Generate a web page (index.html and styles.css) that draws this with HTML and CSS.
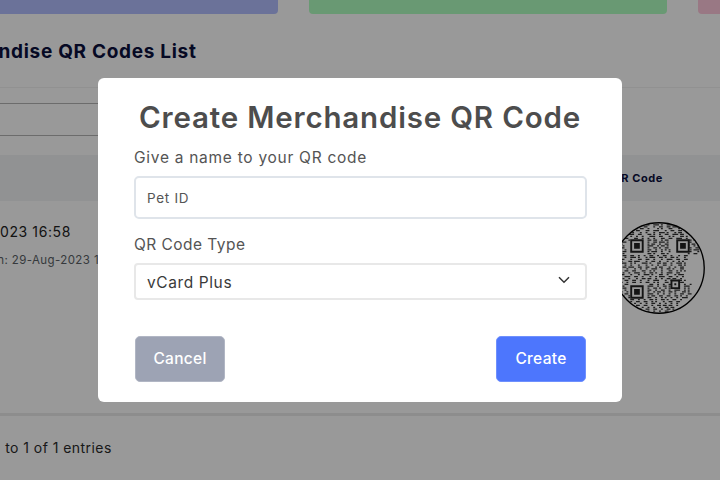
FILE: index.html
```html
<!DOCTYPE html>
<html lang="en">
<head>
<meta charset="utf-8">
<title>Merchandise QR Codes</title>
<link rel="stylesheet" href="styles.css">
</head>
<body>
<div class="page">
  <div class="stats">
    <div class="stat stat-blue"></div>
    <div class="stat stat-green"></div>
    <div class="stat stat-pink"></div>
  </div>
  <h2 class="list-title">Merchandise QR Codes List</h2>
  <div class="panel">
    <div class="filters">
      <div class="filter-box"></div>
    </div>
    <div class="thead"><span class="th-qr">QR Code</span></div>
    <div class="trow">
      <div class="dates">
        <div class="date-main">29-Aug-2023 16:58</div>
        <div class="date-sub">Updated on: 29-Aug-2023 16:58</div>
      </div>
      <svg class="qr" viewBox="0 0 48 48" aria-label="QR code">
        <defs><clipPath id="qr-clip"><circle cx="24" cy="24" r="23.6"/></clipPath></defs>
        <circle cx="24" cy="24" r="23.6" fill="#fff"/>
        <g clip-path="url(#qr-clip)">
          <path class="qr-mods" d="M17 1.5h2m2 0h3m1 0h1m2 0h4
M13 2.5h1m2 0h2m3 0h1m2 0h2m2 0h2m1 0h3m1 0h2
M10 3.5h3m1 0h2m2 0h1m4 0h1m1 0h1m3 0h2m3 0h1m2 0h3
M9 4.5h1m2 0h2m3 0h2m2 0h3m3 0h1m2 0h2m2 0h2m2 0h2
M6 5.5h2m2 0h1m3 0h1m2 0h1m3 0h1m2 0h3m1 0h1m3 0h1m1 0h2m2 0h1
M5 6.5h1m2 0h3m2 0h2m3 0h2m1 0h1m2 0h1m2 0h2m2 0h3m1 0h2
M4 7.5h3m2 0h1m2 0h1m2 0h1m3 0h3m2 0h2m3 0h1m1 0h1m3 0h2m1 0h1
M3 8.5h1m2 0h2m3 0h2m2 0h1m2 0h1m2 0h1m3 0h2m2 0h2m2 0h3m2 0h1
M3 9.5h2m3 0h1m9 0h2m1 0h2m2 0h1m1 0h2m10 0h2m1 0h1
M2 10.5h1m2 0h2m11 0h1m2 0h2m1 0h3m1 0h1m10 0h2m2 0h1
M2 11.5h3m13 0h1m1 0h2m2 0h1m2 0h2m10 0h1m1 0h2
M1 12.5h2m2 0h1m12 0h3m2 0h1m1 0h2m1 0h1m10 0h1m2 0h1m1 0h1
M1 13.5h1m2 0h2m12 0h1m2 0h2m1 0h1m2 0h2m10 0h2m2 0h2
M1 14.5h3m2 0h1m11 0h2m2 0h1m2 0h1m1 0h1m1 0h1m10 0h1m1 0h3
M2 15.5h1m2 0h2m11 0h1m1 0h3m2 0h1m3 0h1m9 0h2m3 0h1
M1 16.5h2m2 0h1m12 0h2m1 0h1m3 0h2m1 0h1m10 0h1m2 0h2
M1 17.5h1m3 0h2m2 0h2m2 0h1m2 0h1m2 0h2m2 0h1m2 0h2m2 0h1m3 0h1m2 0h2
M0 18.5h3m3 0h1m2 0h3m1 0h1m3 0h1m1 0h3m2 0h2m1 0h1m2 0h2m1 0h1m3 0h1
M1 19.5h1m2 0h2m3 0h1m3 0h2m2 0h2m2 0h1m3 0h1m2 0h3m2 0h2m2 0h2
M0 20.5h2m2 0h1m3 0h2m1 0h3m3 0h1m2 0h2m2 0h1m3 0h1m2 0h1m2 0h1m1 0h1
M1 21.5h1m2 0h3m2 0h1m1 0h1m3 0h3m1 0h1m3 0h2m1 0h2m2 0h1m2 0h3m1 0h1
M0 22.5h3m3 0h1m2 0h1m3 0h1m3 0h1m2 0h1m2 0h1m2 0h2m2 0h1m3 0h2m1 0h1
M1 23.5h2m2 0h2m1 0h3m2 0h2m2 0h2m3 0h1m1 0h2m3 0h1m2 0h1m2 0h2
M0 24.5h1m2 0h1m3 0h1m3 0h1m2 0h1m2 0h1m2 0h3m2 0h1m2 0h2m1 0h1m3 0h2
M1 25.5h3m2 0h2m2 0h2m3 0h2m2 0h1m1 0h1m3 0h1m3 0h2m2 0h1m1 0h1m1 0h1
M0 26.5h2m3 0h1m2 0h1m2 0h3m2 0h1m2 0h2m1 0h1m2 0h1m2 0h3m2 0h2
M1 27.5h1m2 0h2m3 0h1m3 0h1m2 0h3m1 0h1m3 0h2m2 0h1m3 0h1m1 0h3
M1 28.5h3m2 0h3m2 0h2m2 0h1m3 0h1m2 0h1m1 0h3m2 0h2m2 0h1m2 0h1
M1 29.5h1m3 0h1m2 0h1m3 0h1m2 0h2m1 0h2m2 0h1m2 0h1m2 0h2m1 0h2m2 0h1
M2 30.5h2m2 0h2m2 0h2m2 0h1m3 0h1m2 0h3m3 0h1m2 0h1m3 0h2m1 0h1
M1 31.5h1m2 0h1m2 0h1m2 0h2m2 0h1m2 0h2m2 0h1m1 0h1m3 0h2m2 0h1m3 0h2
M1 32.5h3m2 0h2m11 0h2m2 0h1m2 0h1m2 0h3m2 0h1m2 0h1m2 0h1
M2 33.5h1m2 0h1m12 0h3m2 0h1m2 0h2m1 0h1m3 0h2m2 0h3
M2 34.5h2m1 0h2m11 0h1m2 0h2m1 0h1m2 0h1m1 0h1m2 0h1m1 0h1m2 0h1m1 0h1
M2 35.5h1m3 0h1m11 0h2m2 0h1m2 0h2m2 0h1m2 0h3m2 0h1m1 0h1
M3 36.5h2m2 0h1m10 0h1m2 0h1m1 0h2m1 0h1m2 0h2m1 0h1m3 0h2m1 0h1
M3 37.5h1m2 0h2m10 0h3m2 0h1m2 0h1m2 0h1m2 0h1m2 0h2m2 0h2
M4 38.5h2m2 0h1m9 0h1m1 0h2m2 0h2m2 0h2m2 0h2m1 0h1m2 0h1
M4 39.5h1m3 0h1m9 0h2m2 0h1m2 0h1m1 0h1m2 0h1m2 0h1m2 0h3
M5 40.5h2m2 0h2m2 0h1m2 0h1m2 0h2m1 0h1m2 0h2m1 0h1m2 0h2m2 0h1
M6 41.5h1m2 0h1m2 0h2m2 0h2m2 0h1m1 0h1m3 0h1m2 0h2m2 0h2
M7 42.5h2m2 0h1m2 0h1m2 0h1m2 0h2m2 0h1m2 0h1m2 0h1m2 0h1
M9 43.5h1m2 0h2m2 0h2m2 0h1m2 0h2m1 0h2m1 0h2m2 0h1
M11 44.5h2m2 0h1m2 0h1m2 0h1m2 0h1m2 0h2m1 0h2
M14 45.5h1m2 0h2m2 0h2m2 0h1m2 0h2m1 0h1
M18 46.5h1m2 0h1m2 0h1m2 0h2"/>
          <path class="qr-finder" d="M9.5 9.5h6v6h-6zM33.5 9.5h6v6h-6zM9.5 33.5h6v6h-6z"/>
          <path class="qr-eye" d="M11 11h3v3h-3zM35 11h3v3h-3zM11 35h3v3h-3z"/>
          <path class="qr-finder" d="M30.5 30.5h4v4h-4z"/>
          <path class="qr-eye" d="M32 32h1v1h-1z"/>
        </g>
        <circle class="qr-ring" cx="24" cy="24" r="23.6"/>
      </svg>
    </div>
    <div class="tfoot">Showing 1 to 1 of 1 entries</div>
  </div>
</div>

<div class="overlay">
  <form class="modal">
    <h1 class="modal-title">Create Merchandise QR Code</h1>
    <label class="field-label field-label-first" for="qr-name">Give a name to your QR code</label>
    <input class="text-input" id="qr-name" type="text" value="Pet ID">
    <label class="field-label field-label-second" for="qr-type">QR Code Type</label>
    <div class="select">
      <span id="qr-type">vCard Plus</span>
      <svg class="chevron" viewBox="0 0 12 8" aria-hidden="true"><path d="M1 1.2 6 6.2 11 1.2"/></svg>
    </div>
    <div class="actions">
      <button type="button" class="btn btn-cancel">Cancel</button>
      <button type="button" class="btn btn-create">Create</button>
    </div>
  </form>
</div>
</body>
</html>
```
FILE: styles.css
```css
* { box-sizing: border-box; }
html, body { margin: 0; height: 100%; overflow: hidden; }
body { font-family: Inter, "Liberation Sans", sans-serif; background: #fff; }

.page { width: 720px; height: 480px; overflow: hidden; background: #fff; }

.stats { display: flex; gap: 31px; margin-left: -40px; height: 14px; }
.stat { height: 14px; border-radius: 0 0 4px 4px; flex: none; }
.stat-blue { width: 318px; background: #b2bfff; }
.stat-green { width: 358px; background: #b0ffc0; }
.stat-pink { width: 120px; background: #ffc8dc; }

.list-title {
  margin: 27px 0 0 -76px; height: 22px; line-height: 22px;
  font-size: 19px; font-weight: 700; color: #0a0f3c; white-space: nowrap; letter-spacing: .7px;
}

.panel { margin-top: 24px; border-top: 1px solid #f2f2f2; }
.filters { height: 67px; padding-top: 15px; }
.filter-box { width: 120px; height: 33px; margin-left: -20px; border: 1px solid #b4b4b4; border-width: 1px 0; }
.thead {
  height: 46px; background: #f2f3f6;
  display: flex; align-items: center; justify-content: flex-end; padding-right: 57px;
}
.th-qr { font-size: 11px; font-weight: 700; color: #0a0f3c; letter-spacing: .6px; }

.trow { height: 212px; display: flex; justify-content: space-between; }
.dates { margin-left: -69px; padding-top: 22px; color: #222; }
.date-main { font-size: 14px; line-height: 18px; white-space: nowrap; letter-spacing: .6px; }
.date-sub { margin-top: 11px; margin-left: 6px; font-size: 11.5px; line-height: 16px; white-space: nowrap; color: #5a5f66; letter-spacing: .4px; }

.qr { width: 92px; height: 92px; margin: 21px 15px 0 0; flex: none; }
.qr-mods { fill: none; stroke: #333; stroke-width: .68; }
.qr-finder { fill: #fff; stroke: #222; stroke-width: 1; }
.qr-eye { fill: #222; }
.qr-ring { fill: none; stroke: #000; stroke-width: .7; }

.tfoot {
  margin-left: -70px; height: 65px; border-top: 3px solid #ececec;
  display: flex; align-items: center; padding-top: 1px;
  font-size: 14px; color: #2b2b2b; white-space: nowrap; letter-spacing: .45px;
}

.overlay { position: fixed; inset: 0; background: rgba(0,0,0,.4); display: flex; justify-content: center; align-items: flex-start; padding-top: 78px; }
.modal {
  width: 524px; height: 324px; background: #fff; border-radius: 6px;
  padding: 20px 36px 0; display: flex; flex-direction: column;
}
.modal-title {
  margin: 0; text-align: center; font-size: 29.5px; line-height: 38px; font-weight: 600;
  color: #4d4d4d; letter-spacing: .82px; white-space: nowrap;
}
.field-label { font-size: 15.5px; line-height: 20px; color: #545454; }
.field-label-first { margin-top: 12px; letter-spacing: .72px; }
.field-label-second { margin-top: 16px; letter-spacing: .45px; }
.text-input {
  margin-top: 8px; height: 43px; width: 453px; border: 2px solid #dfe4ea; border-radius: 5px;
  padding: 0 11px; font: 400 13.5px Inter, "Liberation Sans", sans-serif; color: #555; letter-spacing: .7px; outline: none;
}
.select {
  margin-top: 8px; height: 37px; width: 453px; border: 2px solid #e8e8e8; border-radius: 4px;
  padding: 1px 15px 0 11px; display: flex; align-items: center; justify-content: space-between;
  font-size: 15.5px; color: #3a3a3a; letter-spacing: .6px;
}
.chevron { width: 12px; height: 8px; margin-top: -4px; }
.chevron path { fill: none; stroke: #333; stroke-width: 1.5; }
.actions { margin-top: 36px; display: flex; justify-content: space-between; padding: 0 0 0 1px; width: 452px; }
.btn {
  width: 90px; height: 46px; border-radius: 5px; font: 500 15.5px Inter, "Liberation Sans", sans-serif; color: #fff; letter-spacing: .3px; padding: 0 0 2px;
}
.btn-cancel { background: #9da3b4; border: 1px solid #b1b6c4; }
.btn-create { background: #4d76fd; border: 1px solid #6f90fd; }
```
